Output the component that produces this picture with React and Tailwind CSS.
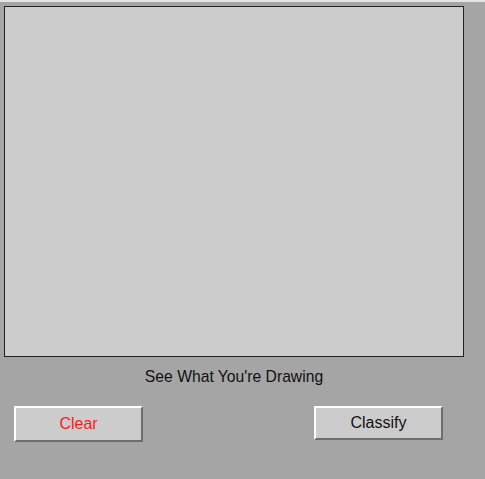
export default function App() {
  return (
    <div className="w-[485px] h-[479px] bg-[#a5a5a5] border-t-2 border-[#e4e4e4] font-['Liberation_Sans',Arial,sans-serif] overflow-hidden">
      <div className="ml-[4px] mt-[4px] w-[460px] h-[351px] bg-[#cccccc] border border-[#222222]" />
      <div className="w-[460px] ml-[4px] mt-[11px] text-center text-[15.7px] leading-[18px] text-[#111111]">
        See What You're Drawing
      </div>
      <div className="flex justify-between ml-[14px] mr-[42px] mt-[20px]">
        <button
          type="button"
          className="w-[129px] h-[36px] bg-[#cccccc] border-t-2 border-l-2 border-b-2 border-r-2 border-t-white border-l-white border-b-[#6e6e6e] border-r-[#6e6e6e] text-[16px] text-[#ff1a1a]"
        >
          Clear
        </button>
        <button
          type="button"
          className="w-[129px] h-[34px] bg-[#cccccc] border-t-2 border-l-2 border-b-2 border-r-2 border-t-white border-l-white border-b-[#6e6e6e] border-r-[#6e6e6e] text-[16px] text-[#111111]"
        >
          Classify
        </button>
      </div>
    </div>
  );
}
